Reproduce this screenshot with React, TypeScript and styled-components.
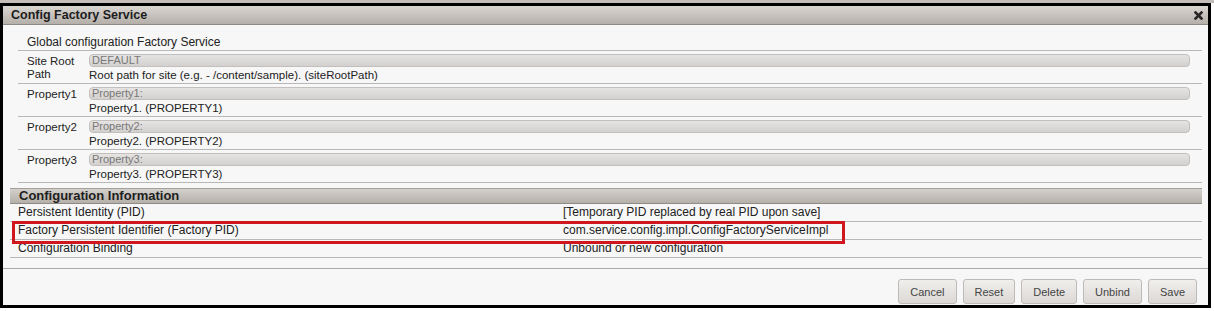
import { ReactElement } from 'react';
import styled, { createGlobalStyle } from 'styled-components';

interface Field {
  label: string[];
  placeholder: string;
  description: string;
}

const fields: Field[] = [
  {
    label: ['Site Root', 'Path'],
    placeholder: 'DEFAULT',
    description: 'Root path for site (e.g. - /content/sample). (siteRootPath)',
  },
  { label: ['Property1'], placeholder: 'Property1:', description: 'Property1. (PROPERTY1)' },
  { label: ['Property2'], placeholder: 'Property2:', description: 'Property2. (PROPERTY2)' },
  { label: ['Property3'], placeholder: 'Property3:', description: 'Property3. (PROPERTY3)' },
];

const info = [
  ['Persistent Identity (PID)', '[Temporary PID replaced by real PID upon save]'],
  ['Factory Persistent Identifier (Factory PID)', 'com.service.config.impl.ConfigFactoryServiceImpl'],
  ['Configuration Binding', 'Unbound or new configuration'],
];

const buttons = ['Cancel', 'Reset', 'Delete', 'Unbind', 'Save'];

export default function App(): ReactElement {
  return (
    <>
      <GlobalStyle />
      <Page>
        <Frame>
          <TitleBar>
            <Title>Config Factory Service</Title>
            <CloseIcon width='9' height='9' viewBox='0 0 9 9'>
              <path d='M1.5 1.5 L7.5 7.5 M7.5 1.5 L1.5 7.5' stroke='#262626' strokeWidth='2.6' strokeLinecap='square' />
            </CloseIcon>
          </TitleBar>
          <Body>
            <FormTable>
              <GlobalRow>Global configuration Factory Service</GlobalRow>
              {fields.map((f) => (
                <FieldRow key={f.placeholder}>
                  <Label>
                    {f.label.map((l) => (
                      <div key={l}>{l}</div>
                    ))}
                  </Label>
                  <div>
                    <Input>{f.placeholder}</Input>
                    <Description>{f.description}</Description>
                  </div>
                </FieldRow>
              ))}
            </FormTable>
            <SectionHeader>Configuration Information</SectionHeader>
            <InfoTable>
              {info.map(([k, v]) => (
                <InfoRow key={k}>
                  <span>{k}</span>
                  <span>{v}</span>
                </InfoRow>
              ))}
              <Highlight />
            </InfoTable>
          </Body>
          <ButtonPane>
            {buttons.map((b) => (
              <Button key={b}>{b}</Button>
            ))}
          </ButtonPane>
        </Frame>
      </Page>
    </>
  );
}

const GlobalStyle = createGlobalStyle`
  html, body {
    margin: 0;
    padding: 0;
    background: #ffffff;
  }
  * {
    box-sizing: border-box;
  }
`;

const Page = styled.div`
  width: 1214px;
  height: 311px;
  border-top: 3px solid #c3beb9;
  font-family: 'Liberation Sans', Arial, sans-serif;
  font-size: 11.5px;
  color: #222;
`;

const Frame = styled.div`
  width: 1211px;
  height: 305px;
  border: 3px solid #000;
  background: #f7f7f7;
  display: flex;
  flex-direction: column;
`;

const TitleBar = styled.div`
  height: 19px;
  display: flex;
  align-items: center;
  justify-content: space-between;
  padding: 0 5px 0 8px;
  background: linear-gradient(#d9d5d1, #b5afa9);
  border-bottom: 1px solid #8e8984;
`;

const Title = styled.span`
  font-weight: bold;
  font-size: 12.5px;
  color: #1c1c1c;
`;

const CloseIcon = styled.svg`
  display: block;
`;

const Body = styled.div`
  flex: 1;
  padding: 9px 6px 0 7px;
`;

const FormTable = styled.div`
  margin-left: 8px;
`;

const GlobalRow = styled.div`
  height: 17px;
  line-height: 16px;
  padding-left: 9px;
  font-size: 12px;
  border-bottom: 1px solid #b8b8b8;
`;

const FieldRow = styled.div`
  display: grid;
  grid-template-columns: 62px 1fr;
  padding: 3px 12px 1px 9px;
  border-bottom: 1px solid #b8b8b8;
`;

const Label = styled.div`
  line-height: 13px;
  padding-top: 1px;
`;

const Input = styled.div`
  height: 13px;
  line-height: 11px;
  padding-left: 2px;
  border: 1px solid #c2bfbc;
  border-radius: 4px;
  background: linear-gradient(#e6e4e2, #d3d1cf);
  color: #787878;
  font-size: 11px;
`;

const Description = styled.div`
  margin-top: 1px;
  line-height: 14px;
`;

const SectionHeader = styled.div`
  margin-top: 5px;
  height: 16px;
  line-height: 14px;
  padding-left: 9px;
  font-weight: bold;
  font-size: 13px;
  color: #1e1e1e;
  background: linear-gradient(#d3cfcb, #b6b0aa);
  border-top: 1px solid #a6a09a;
  border-bottom: 1px solid #8f8a85;
`;

const InfoTable = styled.div`
  position: relative;
`;

const InfoRow = styled.div`
  display: grid;
  grid-template-columns: 545px 1fr;
  height: 18px;
  line-height: 17px;
  padding-left: 8px;
  font-size: 12px;
  border-bottom: 1px solid #b8b8b8;
`;

const Highlight = styled.div`
  position: absolute;
  left: 2px;
  top: 17px;
  width: 833px;
  height: 23px;
  border: 3px solid #d0161f;
`;

const ButtonPane = styled.div`
  height: 37px;
  display: flex;
  justify-content: flex-end;
  gap: 6px;
  padding: 10px 11px 0;
  border-top: 1px solid #a9a9a9;
`;

const Button = styled.button`
  height: 25px;
  padding: 0 11px;
  font-family: 'Liberation Sans', Arial, sans-serif;
  font-size: 11px;
  color: #444;
  background: linear-gradient(#f1efed, #dbd8d5);
  border: 1px solid #bdbab7;
  border-radius: 3px;
`;
